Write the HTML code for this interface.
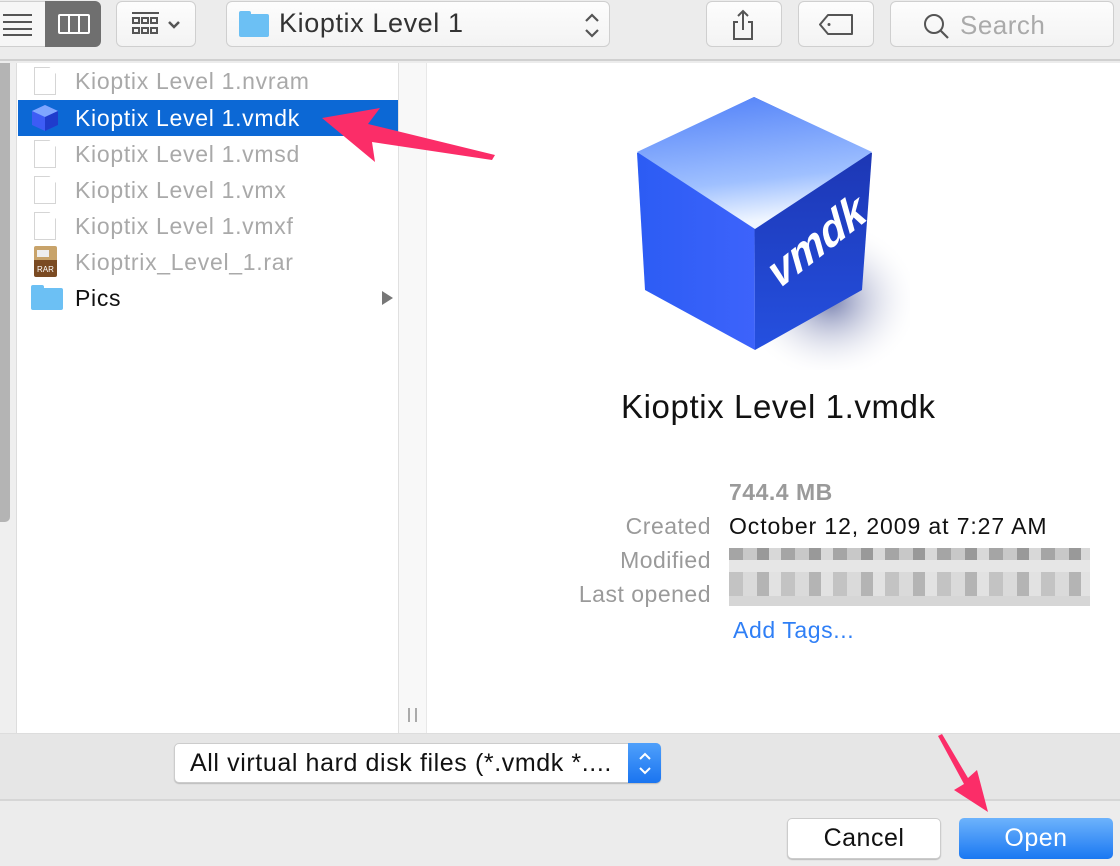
<!DOCTYPE html>
<html><head><meta charset="utf-8"><style>
*{margin:0;padding:0;box-sizing:border-box}
body{width:1120px;height:866px;overflow:hidden;background:#ececec;font-family:"Liberation Sans",sans-serif;position:relative}
.abs{position:absolute}
.btn{position:absolute;background:linear-gradient(#fdfdfd,#f3f3f3);border:1px solid #cfcfcf;border-radius:6px}
.row{position:absolute;left:18px;width:380px;height:36px;font-size:23px;letter-spacing:0.7px;color:#a9a9a9;line-height:36px;white-space:nowrap}
.row span{position:absolute;left:57px}
.doc{position:absolute;left:16px;top:4px;width:22px;height:28px;background:#fff;border:1px solid #d5d5d5;clip-path:polygon(0 0,70% 0,100% 25%,100% 100%,0 100%)}
.lbl{position:absolute;font-size:23px;letter-spacing:0.5px;color:#9a9a9a;text-align:right;width:250px;left:461px;white-space:nowrap}
</style></head><body>
<div class="abs" style="left:0;top:0;width:1120px;height:61px;background:#ececec;border-bottom:2px solid #d0d0d0"></div>
<div class="btn" style="left:-8px;top:1px;width:108px;height:46px;background:#f6f6f6"></div>
<div class="abs" style="left:3px;top:14px;width:29px;height:2px;background:#555;box-shadow:0 7px 0 #555,0 14px 0 #555,0 20px 0 #555"></div>
<div class="abs" style="left:45px;top:1px;width:56px;height:46px;background:#6f6f6f;border-radius:0 6px 6px 0"></div>
<div class="abs" style="left:58px;top:14px;width:32px;height:20px;border:2px solid #fff;border-radius:2px"></div>
<div class="abs" style="left:68px;top:14px;width:2px;height:20px;background:#fff"></div>
<div class="abs" style="left:78px;top:14px;width:2px;height:20px;background:#fff"></div>
<div class="btn" style="left:116px;top:1px;width:80px;height:46px"></div>
<svg class="abs" style="left:130px;top:12px" width="55" height="26"><g fill="none" stroke="#555" stroke-width="2"><line x1="2" y1="1" x2="29" y2="1"/><rect x="3" y="6" width="6" height="5"/><rect x="12" y="6" width="6" height="5"/><rect x="21" y="6" width="6" height="5"/><rect x="3" y="16" width="6" height="5"/><rect x="12" y="16" width="6" height="5"/><rect x="21" y="16" width="6" height="5"/><polyline points="39,10 44,15 49,10" stroke-width="2.5"/></g></svg>
<div class="btn" style="left:226px;top:1px;width:384px;height:46px"></div>
<div class="abs" style="left:239px;top:14px;width:30px;height:23px;background:#6cc0f4;border-radius:2px"></div>
<div class="abs" style="left:239px;top:11px;width:12px;height:5px;background:#6cc0f4;border-radius:2px 2px 0 0"></div>
<div class="abs" style="left:279px;top:8px;font-size:27px;letter-spacing:0.6px;color:#333">Kioptix Level 1</div>
<svg class="abs" style="left:583px;top:12px" width="20" height="27"><g fill="none" stroke="#555" stroke-width="2.2"><polyline points="3,9 9,3 15,9"/><polyline points="3,18 9,24 15,18"/></g></svg>
<div class="btn" style="left:706px;top:1px;width:76px;height:46px"></div>
<svg class="abs" style="left:731px;top:8px" width="26" height="34"><g fill="none" stroke="#555" stroke-width="2"><polyline points="7,14 3,14 3,31 21,31 21,14 17,14"/><line x1="12" y1="3" x2="12" y2="22"/><polyline points="7,8 12,3 17,8"/></g></svg>
<div class="btn" style="left:798px;top:1px;width:76px;height:46px"></div>
<svg class="abs" style="left:819px;top:14px" width="36" height="22"><path d="M9 1 H33 V20 H9 L1 10.5 Z" fill="none" stroke="#555" stroke-width="2" stroke-linejoin="round"/><circle cx="10" cy="10.5" r="1.5" fill="#555"/></svg>
<div class="btn" style="left:890px;top:1px;width:224px;height:46px"></div>
<svg class="abs" style="left:922px;top:13px" width="28" height="28"><circle cx="12" cy="11" r="9" fill="none" stroke="#555" stroke-width="2"/><line x1="18.5" y1="17.5" x2="26" y2="25" stroke="#555" stroke-width="2.2"/></svg>
<div class="abs" style="left:960px;top:10px;font-size:26px;letter-spacing:0.5px;color:#aaa">Search</div>
<div class="abs" style="left:0;top:63px;width:1120px;height:670px;background:#fff"></div>
<div class="abs" style="left:0;top:63px;width:17px;height:670px;background:#efefef;border-right:1px solid #ddd"></div>
<div class="abs" style="left:0;top:63px;width:10px;height:459px;background:#b4b4b4;border-radius:0 0 5px 0"></div>
<div class="abs" style="left:398px;top:63px;width:29px;height:670px;background:#f8f8f8;border-left:1px solid #e0e0e0;border-right:1px solid #e8e8e8"></div>
<div class="abs" style="left:408px;top:708px;width:2px;height:14px;background:#aaa"></div>
<div class="abs" style="left:415px;top:708px;width:2px;height:14px;background:#aaa"></div>
<div class="row" style="top:63px"><div class="doc"></div><span>Kioptix Level 1.nvram</span></div>
<div class="row" style="top:100px;background:#0c68d5;color:#fff"><svg class="abs" style="left:12px;top:4px" width="30" height="28"><polygon points="15,1 28,7 28,21 15,27 2,21 2,7" fill="#3d5cf5"/><polygon points="15,1 28,7 15,13 2,7" fill="#7ea6ff"/><polygon points="15,13 28,7 28,21 15,27" fill="#1f3ccc"/></svg><span>Kioptix Level 1.vmdk</span></div>
<div class="row" style="top:136px"><div class="doc"></div><span>Kioptix Level 1.vmsd</span></div>
<div class="row" style="top:172px"><div class="doc"></div><span>Kioptix Level 1.vmx</span></div>
<div class="row" style="top:208px"><div class="doc"></div><span>Kioptix Level 1.vmxf</span></div>
<div class="row" style="top:244px"><div class="abs" style="left:16px;top:2px;width:23px;height:31px;background:linear-gradient(#c8a36a 0 45%,#7a4a22 45%);border-radius:2px"></div><div class="abs" style="left:19px;top:6px;width:12px;height:7px;background:#eee"></div><div class="abs" style="left:19px;top:22px;font-size:8px;letter-spacing:0;color:#fff;line-height:8px">RAR</div><span>Kioptrix_Level_1.rar</span></div>
<div class="row" style="top:280px;color:#111"><div class="abs" style="left:13px;top:8px;width:32px;height:22px;background:#6cc0f4;border-radius:2px"></div><div class="abs" style="left:13px;top:5px;width:13px;height:5px;background:#6cc0f4;border-radius:2px 2px 0 0"></div><span>Pics</span><svg class="abs" style="left:364px;top:11px" width="12" height="14"><polygon points="0,0 11,7 0,14" fill="#777"/></svg></div>
<svg class="abs" style="left:300px;top:100px" width="200" height="70"><polygon points="22,18 80,8 68,24 195,55 192,60 72,42 75,62" fill="#fb2d68"/></svg>
<svg class="abs" style="left:610px;top:80px" width="300" height="290">
<defs><linearGradient id="t" x1="0" y1="0" x2="0.2" y2="1"><stop offset="0" stop-color="#4f7ff8"/><stop offset="0.7" stop-color="#9fc0ff"/><stop offset="1" stop-color="#f0f6ff"/></linearGradient>
<linearGradient id="l" x1="0" y1="0" x2="1" y2="0"><stop offset="0" stop-color="#2c5cf4"/><stop offset="1" stop-color="#3d63fb"/></linearGradient>
<linearGradient id="r" x1="0" y1="0" x2="0" y2="1"><stop offset="0" stop-color="#1a30a8"/><stop offset="1" stop-color="#2550e0"/></linearGradient>
<radialGradient id="s"><stop offset="0" stop-color="#1b2a7a" stop-opacity=".6"/><stop offset="1" stop-color="#fff" stop-opacity="0"/></radialGradient></defs>
<ellipse cx="220" cy="220" rx="90" ry="80" fill="url(#s)"/>
<polygon points="144,17 27,73 35,210 145,270" fill="url(#l)"/>
<polygon points="144,17 262,73 252,210 145,270" fill="url(#r)"/>
<polygon points="144,17 262,72 145,149 27,72" fill="url(#t)"/>
<text x="0" y="0" transform="translate(168,210) rotate(-38) skewX(-12)" fill="#fff" font-family="Liberation Sans" font-weight="bold" font-style="italic" font-size="44">vmdk</text>
</svg>
<div class="abs" style="left:621px;top:388px;font-size:33px;letter-spacing:0.6px;color:#111;white-space:nowrap">Kioptix Level 1.vmdk</div>
<div class="abs" style="left:729px;top:479px;font-size:23px;letter-spacing:0.5px;color:#9a9a9a;font-weight:bold">744.4 MB</div>
<div class="lbl" style="top:513px">Created</div>
<div class="abs" style="left:729px;top:513px;font-size:23px;letter-spacing:0.9px;color:#111;white-space:nowrap">October 12, 2009 at 7:27 AM</div>
<div class="lbl" style="top:547px">Modified</div>
<div class="lbl" style="top:581px">Last opened</div>
<div class="abs" style="left:729px;top:548px;width:361px;height:12px;background:repeating-linear-gradient(90deg,#a5a5a5 0 14px,#c8c8c8 14px 28px,#999 28px 40px,#d8d8d8 40px 52px)"></div>
<div class="abs" style="left:729px;top:560px;width:361px;height:12px;background:#e6e6e6"></div>
<div class="abs" style="left:729px;top:572px;width:361px;height:24px;background:repeating-linear-gradient(90deg,#c3c3c3 0 14px,#dadada 14px 28px,#b4b4b4 28px 40px,#e2e2e2 40px 52px)"></div>
<div class="abs" style="left:729px;top:596px;width:361px;height:10px;background:#d6d6d6"></div>
<div class="abs" style="left:733px;top:617px;font-size:23px;letter-spacing:0.6px;color:#2f7ff6">Add Tags...</div>
<div class="abs" style="left:0;top:733px;width:1120px;height:68px;background:#e6e6e6;border-top:1px solid #ddd;border-bottom:2px solid #d6d6d6"></div>
<div class="abs" style="left:0;top:802px;width:1120px;height:64px;background:#ececec"></div>
<div class="abs" style="left:174px;top:743px;width:487px;height:40px;background:#fff;border:1px solid #ccc;border-radius:5px;box-shadow:0 1px 1px #bbb"></div>
<div class="abs" style="left:628px;top:743px;width:33px;height:40px;background:linear-gradient(#4fa0fb,#1a74f0);border-radius:0 5px 5px 0"></div>
<svg class="abs" style="left:636px;top:750px" width="18" height="27"><g fill="none" stroke="#fff" stroke-width="2"><polyline points="4,9 9,4 14,9"/><polyline points="4,18 9,23 14,18"/></g></svg>
<div class="abs" style="left:190px;top:749px;font-size:25px;letter-spacing:0.6px;color:#111;white-space:nowrap">All virtual hard disk files (*.vmdk *....</div>
<div class="abs" style="left:787px;top:818px;width:154px;height:41px;background:#fff;border:1px solid #ccc;border-radius:5px;box-shadow:0 1px 1px #bbb;font-size:25px;letter-spacing:0.5px;color:#111;text-align:center;line-height:39px">Cancel</div>
<div class="abs" style="left:959px;top:818px;width:154px;height:41px;background:linear-gradient(#6db3fc,#1a78f2);border-radius:5px;font-size:25px;letter-spacing:0.5px;color:#fff;text-align:center;line-height:41px">Open</div>
<svg class="abs" style="left:930px;top:730px" width="70" height="90"><polygon points="8,6 12,4 38,48 47,40 58,82 24,60 34,54" fill="#fb2d68"/></svg>
</body></html>
